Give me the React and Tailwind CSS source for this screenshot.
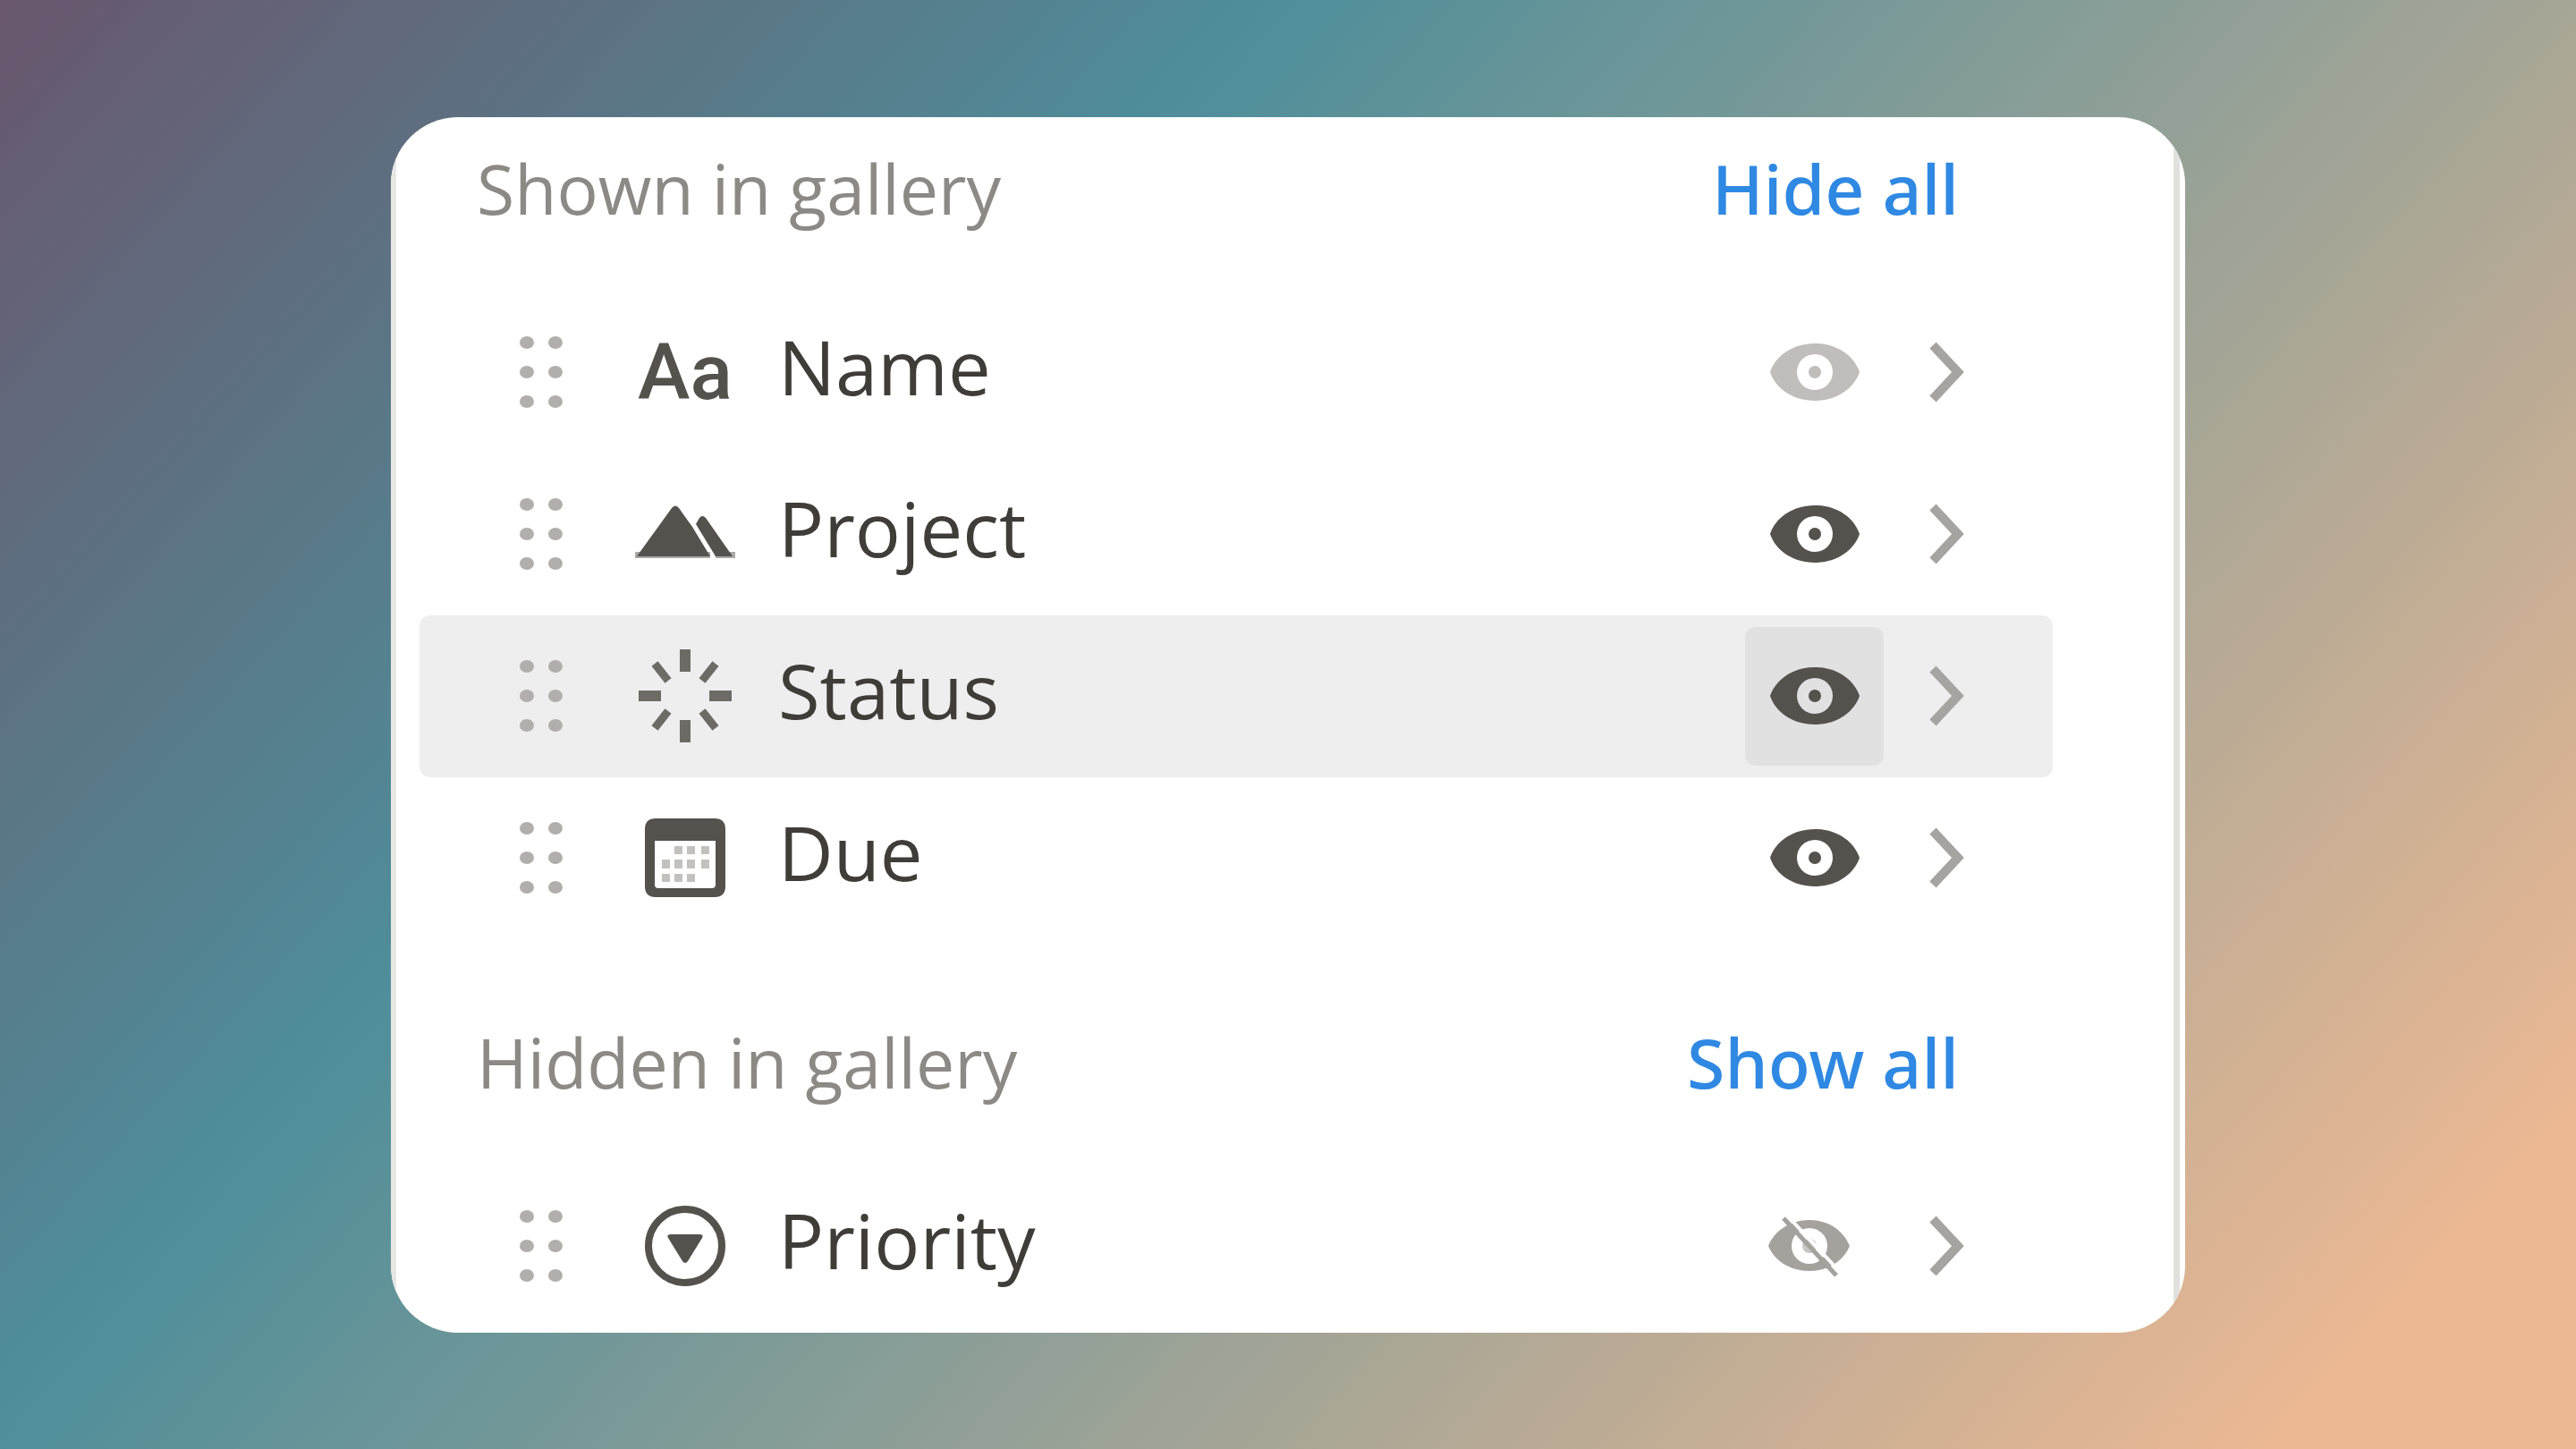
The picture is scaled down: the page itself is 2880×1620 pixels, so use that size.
function Grip() {
  return (
    <svg viewBox="0 0 52 80" className="h-20 w-[52px]" fill="#b0afab" aria-hidden="true">
      {[7, 40, 73].map((y) => (
        <g key={y}>
          <ellipse cx="10" cy={y} rx="8" ry="7" />
          <ellipse cx="42" cy={y} rx="8" ry="7" />
        </g>
      ))}
    </svg>
  );
}

function MountainIcon() {
  return (
    <svg viewBox="0 0 116 116" className="size-[116px]" fill="currentColor" aria-hidden="true">
      <path d="M4 83 43 29Q47 24 51 29L66 50 86 83Z" />
      <path d="M70 47 74 40Q77 36 81 40L111 83H92Z" />
      <path d="M2 78H86V85H2ZM92 78H114V85H92Z" opacity="0.5" />
    </svg>
  );
}

function StatusIcon() {
  return (
    <svg viewBox="0 0 116 116" className="size-[116px]" stroke="#6c6b66" strokeWidth="12" fill="none" aria-hidden="true">
      <path d="M58 6V31M58 85V110M6 58H31M85 58H110" />
      <path d="M24 22 39 41M92 22 77 41M24 94 39 75M92 94 77 75" strokeWidth="9" />
    </svg>
  );
}

function CalendarIcon() {
  return (
    <svg viewBox="0 0 116 116" className="size-[116px]" fill="currentColor" aria-hidden="true">
      <path
        fillRule="evenodd"
        d="M25 14H91Q103 14 103 26V90Q103 102 91 102H25Q13 102 13 90V26Q13 14 25 14ZM24 39V88Q24 92 28 92H88Q92 92 92 88V39Z"
      />
      <g fill="#c2c1be">
        {[46, 60, 76].map((x) => (
          <rect key={x} x={x} y="45" width="9" height="9" />
        ))}
        {[32, 46, 60, 76].map((x) => (
          <rect key={x} x={x} y="60" width="9" height="10" />
        ))}
        {[32, 46, 60].map((x) => (
          <rect key={x} x={x} y="76" width="9" height="9" />
        ))}
      </g>
    </svg>
  );
}

function SelectIcon() {
  return (
    <svg viewBox="0 0 116 116" className="size-[116px]" aria-hidden="true">
      <circle cx="58" cy="58" r="41" fill="none" stroke="currentColor" strokeWidth="8" />
      <path d="M42 45H74Q79 45 77 49L61 75Q58 79 55 75L39 49Q37 45 42 45Z" fill="currentColor" />
    </svg>
  );
}

function TextIcon() {
  return (
    <span className="font-['Roboto',sans-serif] text-[88px] leading-[100px] font-medium" aria-hidden="true">
      Aa
    </span>
  );
}

function Eye() {
  return (
    <svg viewBox="0 0 104 68" className="h-[68px] w-[104px]" fill="currentColor" aria-hidden="true">
      <path
        fillRule="evenodd"
        d="M2 34C8 16 27 2 52 2S96 16 102 34C96 52 77 66 52 66S8 52 2 34ZM52 14A20 20 0 1 0 52 54A20 20 0 1 0 52 14Z"
      />
      <circle cx="52" cy="34" r="7" />
    </svg>
  );
}

function EyeOff() {
  return (
    <svg viewBox="0 0 104 68" className="h-[68px] w-[104px]" aria-hidden="true">
      <path
        fill="currentColor"
        fillRule="evenodd"
        d="M0 34C7 17 24 5 46 5S84 17 91 34C84 51 67 62 46 62S7 51 0 34ZM46 14A20 20 0 1 0 46 54A20 20 0 1 0 46 14Z"
      />
      <circle cx="46" cy="34" r="8" fill="currentColor" opacity="0.6" />
      <path d="M22 1 82 65" stroke="#ffffff" strokeWidth="4" fill="none" />
      <path d="M17 3 76 67" stroke="currentColor" strokeWidth="5" fill="none" />
    </svg>
  );
}

function Chevron() {
  return (
    <svg viewBox="0 0 44 76" className="h-[76px] w-11" fill="none" stroke="#a5a4a0" strokeWidth="10" aria-hidden="true">
      <path d="M5 8 33 38 5 68" />
    </svg>
  );
}

const shown = [
  { name: "Name", Icon: TextIcon, eye: "text-[#bfbebb]" },
  { name: "Project", Icon: MountainIcon, eye: "text-[#53524c]" },
  { name: "Status", Icon: StatusIcon, eye: "text-[#53524c]", active: true },
  { name: "Due", Icon: CalendarIcon, eye: "text-[#53524c]" },
];

const hidden = [{ name: "Priority", Icon: SelectIcon, eye: "text-[#a3a29d]", off: true }];

function SectionHeader({ title, action }) {
  return (
    <div className="mb-[35px] flex h-40 items-center justify-between pr-60 pl-[90px]">
      <h2 className="text-[77px] leading-[100px] text-[#8b8a85]">{title}</h2>
      <button
        type="button"
        className="font-['Noto_Sans',sans-serif] text-[77px] leading-[100px] font-medium text-[#2f89e3]"
      >
        {action}
      </button>
    </div>
  );
}

function PropertyRow({ name, Icon, eye, off, active }) {
  return (
    <li
      className={`mr-[135px] ml-[26px] flex h-[181px] items-center rounded-xl pr-[95px] pl-[110px] ${
        active ? "bg-[#eeeeee]" : ""
      }`}
    >
      <Grip />
      <span className="ml-[77px] flex w-[116px] items-center justify-center text-[#53524c]">
        <Icon />
      </span>
      <span className="ml-[46px] flex-1 pb-3.5 text-[85px] leading-[100px] text-[#3f3d38]">{name}</span>
      <button
        type="button"
        aria-label={`${off ? "Show" : "Hide"} ${name}`}
        className={`flex size-[155px] items-center justify-center rounded-xl ${eye} ${active ? "bg-[#e1e1e1]" : ""}`}
      >
        {off ? <EyeOff /> : <Eye />}
      </button>
      <button type="button" aria-label={`Edit ${name}`} className="ml-[50px]">
        <Chevron />
      </button>
    </li>
  );
}

export default function App() {
  return (
    <main className="flex min-h-screen items-center bg-[linear-gradient(132deg,#69576d_0%,#4f8e9a_33%,#ebb893_92%)] px-[437px] font-['Open_Sans',sans-serif]">
      <div className="flex flex-1 overflow-hidden rounded-[75px] bg-white">
        <div className="w-1.5 bg-[#e6e6e5]" />
        <div className="flex-1 pb-1.5">
          <section>
            <SectionHeader title="Shown in gallery" action="Hide all" />
            <ul>
              {shown.map((p) => (
                <PropertyRow key={p.name} {...p} />
              ))}
            </ul>
          </section>
          <section className="mt-[58px]">
            <SectionHeader title="Hidden in gallery" action="Show all" />
            <ul>
              {hidden.map((p) => (
                <PropertyRow key={p.name} {...p} />
              ))}
            </ul>
          </section>
        </div>
        <div className="mr-1.5 w-[7px] bg-[#e0e0df]" />
      </div>
    </main>
  );
}
